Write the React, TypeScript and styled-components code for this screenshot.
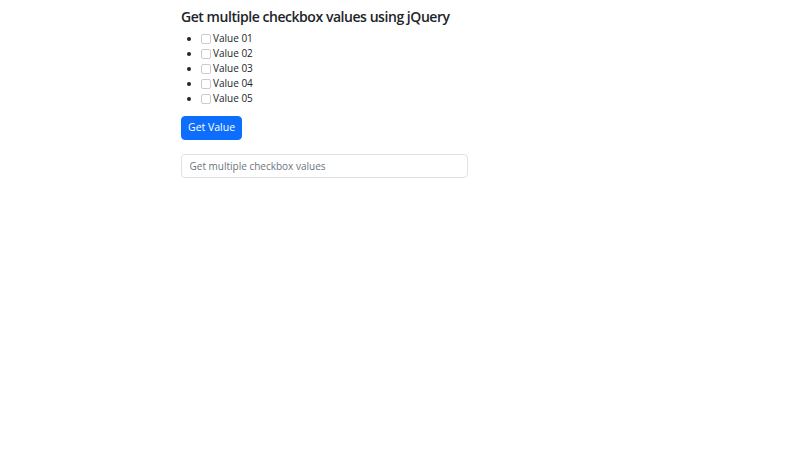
import { FC, useState } from 'react';
import styled, { createGlobalStyle } from 'styled-components';

const GlobalStyle = createGlobalStyle`
  html, body {
    margin: 0;
    padding: 0;
    background: #fff;
  }

  body {
    color: #212529;
    font-family: 'Open Sans', 'Liberation Sans', sans-serif;
    font-size: 10px;
    line-height: 1.5;
  }
`;

const Page = styled.main`
  padding: 8px 0 0 181px;
`;

const Title = styled.h4`
  font-size: 14px;
  font-weight: 600;
  letter-spacing: -0.45px;
  line-height: 18px;
  margin: 0 0 5px;
`;

const List = styled.ul`
  margin: 0 0 10px;
  padding-left: 20px;
`;

const Item = styled.li`
  height: 15px;
  line-height: 15px;
`;

const Label = styled.label`
  cursor: pointer;
  white-space: nowrap;
`;

const Check = styled.input.attrs({ type: 'checkbox' })`
  appearance: none;
  background: #fff;
  border: 1px solid #c8ccd0;
  border-radius: 2px;
  box-sizing: border-box;
  height: 10px;
  margin: 0 2px 0 0;
  vertical-align: -1.5px;
  width: 10px;

  &:checked {
    background: #0d6efd;
    border-color: #0d6efd;
  }
`;

const Button = styled.button`
  background: #0d6efd;
  border: 1px solid #0d6efd;
  border-radius: 4px;
  color: #fff;
  cursor: pointer;
  display: block;
  font-family: inherit;
  font-size: 10.5px;
  height: 23.5px;
  line-height: 15px;
  margin: 0 0 14.5px;
  padding: 0 6px;
`;

const Output = styled.input`
  border: 1px solid #dee2e6;
  border-radius: 4px;
  box-sizing: border-box;
  color: #212529;
  display: block;
  font-family: inherit;
  font-size: 10px;
  height: 24px;
  margin: 0;
  padding: 0 7.5px;
  width: 287px;

  &::placeholder {
    color: #6c757d;
  }
`;

const values = ['Value 01', 'Value 02', 'Value 03', 'Value 04', 'Value 05'];

const App: FC = () => {
  const [checked, setChecked] = useState<string[]>([]);
  const [result, setResult] = useState('');

  const toggle = (value: string) =>
    setChecked((prev) => (prev.includes(value) ? prev.filter((v) => v !== value) : [...prev, value]));

  return (
    <>
      <GlobalStyle />
      <Page>
        <Title>Get multiple checkbox values using jQuery</Title>
        <List>
          {values.map((value) => (
            <Item key={value}>
              <Label>
                <Check checked={checked.includes(value)} onChange={() => toggle(value)} />
                {value}
              </Label>
            </Item>
          ))}
        </List>
        <Button onClick={() => setResult(checked.join(', '))}>Get Value</Button>
        <Output value={result} readOnly placeholder="Get multiple checkbox values" />
      </Page>
    </>
  );
};

export default App;
